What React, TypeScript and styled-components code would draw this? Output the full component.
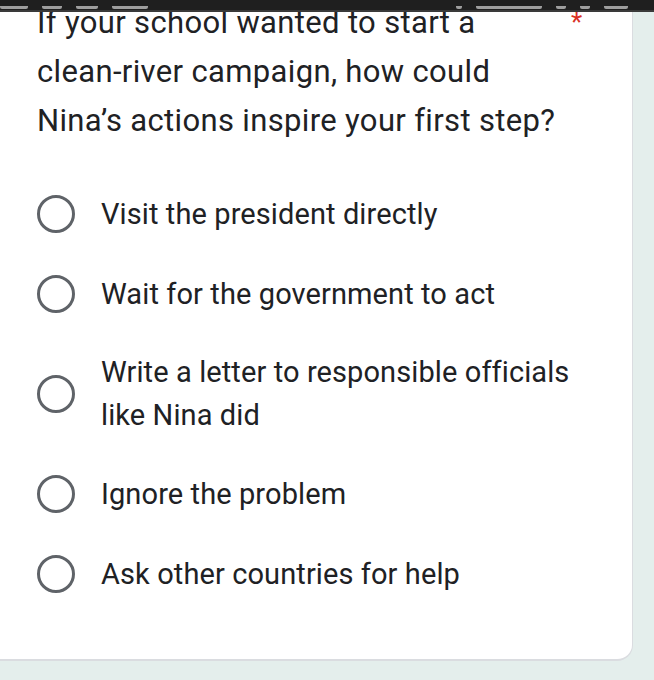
import React from "react";
import styled, { createGlobalStyle } from "styled-components";

const GlobalStyle = createGlobalStyle`
  html, body {
    margin: 0;
    padding: 0;
    background: #e4eeec;
    font-family: Roboto, "Noto Sans", Arial, sans-serif;
  }
`;

// phone status bar, cut off at the top of the screenshot
const StatusBar = styled.div`
  position: fixed;
  top: 0;
  left: 0;
  right: 0;
  height: 12px;
  box-sizing: border-box;
  padding: 0 26px 0 0;
  display: flex;
  align-items: flex-end;
  gap: 14px;
  background: #1f1f1f;
  border-bottom: 2px solid #3a3a3a;
  z-index: 2;
`;

const StatusGlyph = styled.span<{ $w: number; $push?: boolean }>`
  width: ${(p) => p.$w}px;
  height: 3px;
  margin-bottom: 1px;
  margin-left: ${(p) => (p.$push ? "auto" : "0")};
  background: #9e9e9e;
  border-radius: 0 0 2px 2px;
`;

const Page = styled.div`
  width: 654px;
  height: 680px;
  overflow: hidden;
`;

const Card = styled.div`
  width: 633px;
  height: 663px;
  box-sizing: border-box;
  background: #fff;
  border-right: 1px solid #dadce0;
  border-bottom: 2px solid #dadce0;
  border-bottom-right-radius: 16px;
  padding: 0 0 0 37px;
`;

const QuestionRow = styled.div`
  display: flex;
  align-items: flex-start;
  margin-top: -2px;
`;

const Question = styled.div`
  width: 532px;
  font-size: 31px;
  line-height: 49px;
  letter-spacing: 0.35px;
  color: #202124;
`;

const NoWrap = styled.span`
  white-space: nowrap;
`;

const Required = styled.span`
  color: #d93025;
  font-size: 26px;
  line-height: 49px;
  margin-left: 2px;
`;

const Options = styled.div`
  display: flex;
  flex-direction: column;
  margin-top: 29px;
`;

const Option = styled.label`
  display: flex;
  align-items: center;
  min-height: 80px;
  box-sizing: border-box;
  padding: 17px 0;
  cursor: pointer;
`;

const Radio = styled.span`
  flex: none;
  width: 38px;
  height: 38px;
  box-sizing: border-box;
  border: 3px solid #5f6368;
  border-radius: 50%;
`;

const OptionText = styled.span`
  margin-left: 26px;
  width: 480px;
  font-size: 29px;
  line-height: 43px;
  letter-spacing: 0.1px;
  color: #202124;
`;

const options = [
  "Visit the president directly",
  "Wait for the government to act",
  "Write a letter to responsible officials like Nina did",
  "Ignore the problem",
  "Ask other countries for help",
];

export default function App() {
  return (
    <Page>
      <GlobalStyle />
      <StatusBar>
        <StatusGlyph $w={28} />
        <StatusGlyph $w={20} />
        <StatusGlyph $w={22} />
        <StatusGlyph $w={36} />
        <StatusGlyph $w={6} $push />
        <StatusGlyph $w={66} />
        <StatusGlyph $w={10} />
        <StatusGlyph $w={10} />
        <StatusGlyph $w={24} />
      </StatusBar>
      <Card>
        <QuestionRow>
          <Question>
            If your school wanted to start a <NoWrap>clean-river</NoWrap>{" "}
            campaign, how could Nina’s actions inspire your first step?
          </Question>
          <Required>*</Required>
        </QuestionRow>
        <Options>
          {options.map((o) => (
            <Option key={o}>
              <Radio />
              <OptionText>{o}</OptionText>
            </Option>
          ))}
        </Options>
      </Card>
    </Page>
  );
}
